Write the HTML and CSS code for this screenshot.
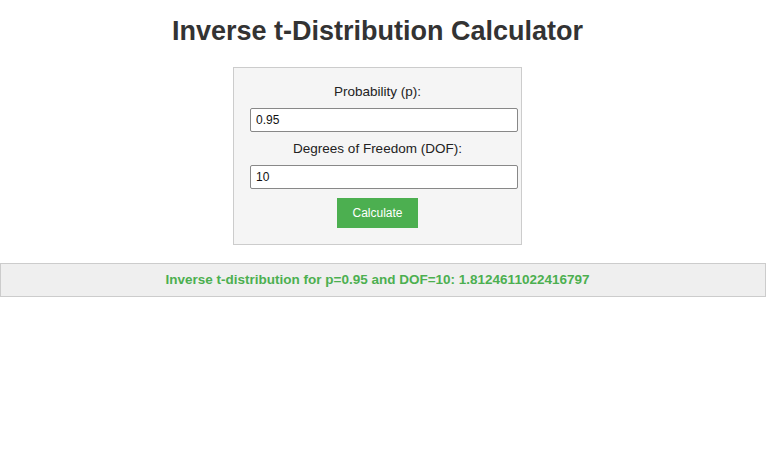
FILE: index.html
```html
<!DOCTYPE html>
<html lang="en">
<head>
    <meta charset="UTF-8">
    <meta name="viewport" content="width=device-width, initial-scale=1.0">
    <title>Inverse t-Distribution Calculator</title>
    <link rel="stylesheet" href="styles.css">
</head>
<body>

<h1>Inverse t-Distribution Calculator</h1>

<div class="calculator">
    <label for="probability">Probability (p):</label>
    <input type="text" id="probability" value="0.95">

    <label for="dof">Degrees of Freedom (DOF):</label>
    <input type="text" id="dof" value="10">

    <button class="btn">Calculate</button>
</div>

<div class="result">Inverse t-distribution for p=0.95 and DOF=10: 1.8124611022416797</div>

</body>
</html>
```

FILE: styles.css
```css
body {
    font-family: 'Liberation Sans', Arial, sans-serif;
    margin: 0;
    padding: 0 13px 0 0;
    text-align: center;
    background: #ffffff;
}

h1 {
    color: #333;
    font-size: 27px;
    margin: 16px 0 20px;
}

.calculator {
    width: 257px;
    margin: 0 auto;
    padding: 15px 15px 16px;
    background: #f5f5f5;
    border: 1px solid #ccc;
}

.calculator label {
    display: block;
    font-size: 13.5px;
    line-height: 18px;
    color: #222;
    margin-bottom: 7px;
}

.calculator input {
    display: block;
    width: 100%;
    padding: 4px 4px 4px 5px;
    margin: 0 0 8px 1px;
    font-size: 12px;
    font-family: 'Liberation Sans', Arial, sans-serif;
    color: #111;
    border: 1px solid #888;
    border-radius: 2px;
}

.btn {
    background-color: #4CAF50;
    color: white;
    border: none;
    width: 81px;
    height: 30px;
    margin-top: 1px;
    font-size: 12px;
    font-family: 'Liberation Sans', Arial, sans-serif;
    cursor: pointer;
}

.result {
    margin: 18px -11px 0 0;
    padding: 8px 11px 9px 0;
    background: #efefef;
    border: 1px solid #ccc;
    color: #4CAF50;
    font-weight: bold;
    font-size: 13.5px;
}
```
